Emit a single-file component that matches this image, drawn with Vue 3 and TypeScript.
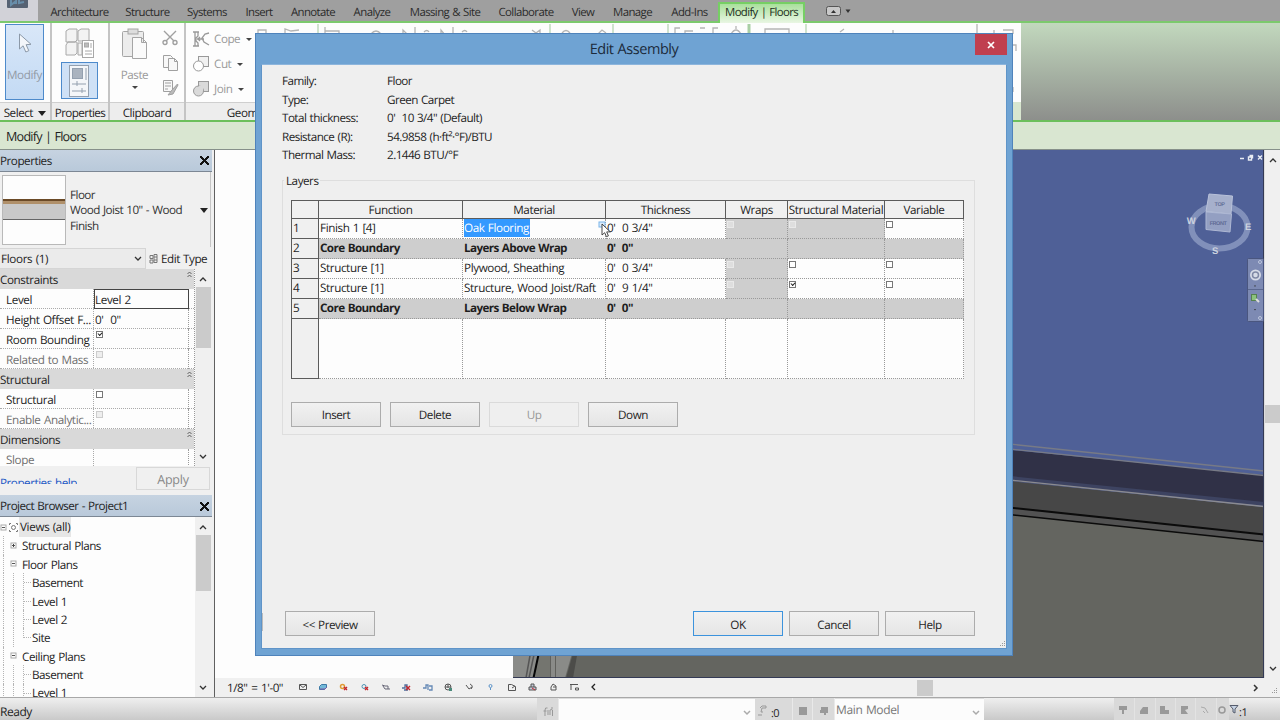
<script setup lang="ts">
interface Tab { label: string; active?: boolean }
interface PropRow { kind: 'head' | 'row'; label: string; value?: string; box?: 'on' | 'off' | 'dim'; dim?: boolean; focus?: boolean }
interface Node { label: string; depth: number; sign?: '+' | '-'; last?: boolean }
interface Layer { n: number; fn: string; mat: string; th: string; core?: boolean; wraps?: string; struct?: string; variable?: string; selected?: boolean }

const tabs: Tab[] = [
  { label: 'Architecture' }, { label: 'Structure' }, { label: 'Systems' }, { label: 'Insert' },
  { label: 'Annotate' }, { label: 'Analyze' }, { label: 'Massing & Site' }, { label: 'Collaborate' },
  { label: 'View' }, { label: 'Manage' }, { label: 'Add-Ins' }, { label: 'Modify | Floors', active: true },
]

const props: PropRow[] = [
  { kind: 'head', label: 'Constraints' },
  { kind: 'row', label: 'Level', value: 'Level 2', focus: true },
  { kind: 'row', label: 'Height Offset F...', value: '0\'  0"' },
  { kind: 'row', label: 'Room Bounding', box: 'on' },
  { kind: 'row', label: 'Related to Mass', box: 'dim', dim: true },
  { kind: 'head', label: 'Structural' },
  { kind: 'row', label: 'Structural', box: 'off' },
  { kind: 'row', label: 'Enable Analytic...', box: 'dim', dim: true },
  { kind: 'head', label: 'Dimensions' },
  { kind: 'row', label: 'Slope', dim: true },
]

const nodes: Node[] = [
  { label: 'Views (all)', depth: 0, sign: '-' },
  { label: 'Structural Plans', depth: 1, sign: '+' },
  { label: 'Floor Plans', depth: 1, sign: '-' },
  { label: 'Basement', depth: 2 },
  { label: 'Level 1', depth: 2 },
  { label: 'Level 2', depth: 2 },
  { label: 'Site', depth: 2, last: true },
  { label: 'Ceiling Plans', depth: 1, sign: '-' },
  { label: 'Basement', depth: 2 },
  { label: 'Level 1', depth: 2 },
]

const info: [string, string][] = [
  ['Family:', 'Floor'],
  ['Type:', 'Green Carpet'],
  ['Total thickness:', '0\'  10 3/4" (Default)'],
  ['Resistance (R):', '54.9858 (h·ft²·°F)/BTU'],
  ['Thermal Mass:', '2.1446 BTU/°F'],
]

const columns = ['', 'Function', 'Material', 'Thickness', 'Wraps', 'Structural Material', 'Variable']

const layers: Layer[] = [
  { n: 1, fn: 'Finish 1 [4]', mat: 'Oak Flooring', th: '0\'  0 3/4"', wraps: 'dim', struct: 'dim', variable: 'off', selected: true },
  { n: 2, fn: 'Core Boundary', mat: 'Layers Above Wrap', th: '0\'  0"', core: true },
  { n: 3, fn: 'Structure [1]', mat: 'Plywood, Sheathing', th: '0\'  0 3/4"', wraps: 'dim', struct: 'off', variable: 'off' },
  { n: 4, fn: 'Structure [1]', mat: 'Structure, Wood Joist/Raft', th: '0\'  9 1/4"', wraps: 'dim', struct: 'on', variable: 'off' },
  { n: 5, fn: 'Core Boundary', mat: 'Layers Below Wrap', th: '0\'  0"', core: true },
]

const layerButtons = [
  { label: 'Insert' }, { label: 'Delete' }, { label: 'Up', disabled: true }, { label: 'Down' },
]
</script>

<template>
  <div class="app">
    <header class="tabs">
      <div class="appmenu"><svg width="38" height="22" viewBox="0 0 38 22"><rect x="7" y="-4" width="21" height="12" rx="1" fill="#566273" /><path d="M11 0v5l5-4v3M19 0v3l5-1" stroke="#6f9fc0" stroke-width="2" fill="none" opacity=".7" /></svg></div>
      <div v-for="t in tabs" :key="t.label" class="tab" :class="{ active: t.active }"><span>{{ t.label }}</span></div>
      <svg class="tabmenu" width="30" height="14" viewBox="0 0 30 14"><rect x="1.500" y="2.500" width="14" height="9" rx="2" fill="#c8c8c8" stroke="#555" /><path d="M6 9l2.500-3 2.500 3zM20.500 5.500h5l-2.500 3.500z" fill="#333" /></svg>
    </header>

    <section class="ribbon">
      <div class="panel p-select">
        <div class="tools"><div class="bigtool"><svg width="14" height="24" viewBox="0 0 14 24"><path d="M1.500 2v15l3.600-3.200 2.700 6.200 3-1.300-2.700-6 4.900-.4z" fill="#f3f6fa" stroke="#8c99a8" /></svg><span>Modify</span></div></div>
        <div class="caption">Select <i class="tri"></i></div>
      </div>
      <div class="panel p-props">
        <div class="tools stack">
          <svg width="32" height="34" viewBox="0 0 32 34" fill="#f3f3f3" stroke="#a8a8a8"><path d="M3 5l3-2h8v11l-2 2H3zM15 5l3-2h8v12H15zM3 19l2-3h9v11l-2 2H3zM15 17h4v12h-4z" /><rect x="19.500" y="14.500" width="11" height="17" fill="#fff" /><rect x="21.500" y="17" width="4" height="4" fill="#bbb" /><path d="M28 17v5M22 25h7M22 28h7" /></svg>
          <div class="pressed"><svg width="22" height="34" viewBox="0 0 22 34" fill="#f4f6f9" stroke="#94a0af"><rect x="1.500" y="1.500" width="19" height="31" /><rect x="4.500" y="4.500" width="10" height="10" fill="#aab3bf" /><path d="M18 4v12M4 20h14M4 27h14M9 17v5M14 24v5" /></svg></div>
        </div>
        <div class="caption">Properties</div>
      </div>
      <div class="panel p-clip">
        <div class="tools clip">
          <div class="paste"><svg width="27" height="34" viewBox="0 0 27 34" fill="#ececec" stroke="#a5a5a5"><rect x="1.500" y="4.500" width="21" height="25" rx="1" /><rect x="7" y="2" width="10" height="5" fill="#ddd" /><path d="M11.500 10.500h9l5 5v16h-14zM20.500 10.500v5h5" fill="#fafafa" /></svg><span>Paste</span><i class="tri small"></i></div>
          <div class="minis">
            <svg width="16" height="18" viewBox="0 0 16 18" stroke="#a0a0a0" stroke-width="1.400" fill="none"><path d="M2 2l10 10M14 2L4 12" /><circle cx="3" cy="13.500" r="2" /><circle cx="13" cy="13.500" r="2" /></svg>
            <svg width="17" height="18" viewBox="0 0 17 18" stroke="#a0a0a0" fill="#f8f8f8"><path d="M1.500 1.500h7l2 2v10h-9z" /><path d="M6.500 4.500h6l3 3v9h-9zM12.500 4.500v3h3" /></svg>
            <svg width="17" height="18" viewBox="0 0 17 18" stroke="#a0a0a0" fill="#f8f8f8"><path d="M1.500 1.500h9v11h-9zM3 4h6M3 7h6M3 10h3" /><path d="M15.500 5L10 11l-4 5 5-1 5-9z" fill="#bbb" /></svg>
          </div>
        </div>
        <div class="caption">Clipboard</div>
      </div>
      <div class="panel p-geo">
        <div class="tools geo">
          <div class="geoitem"><svg width="18" height="18" viewBox="0 0 18 18" stroke="#999" fill="none" stroke-width="1.300"><path d="M1 2h6M1 16h6M3 2v14M6 2v4l-2 2v3l2 2v3M17 3l-4 1-3 4 2 4 5 3M5 9h7M8 7l-2 2 2 2" /></svg><span>Cope</span><i class="tri small"></i></div>
          <div class="geoitem"><svg width="18" height="18" viewBox="0 0 18 18" stroke="#999" fill="#f1f1f1"><rect x="6.500" y="1.500" width="10" height="10" /><circle cx="6.500" cy="11" r="5" fill="#fff" /></svg><span>Cut</span><i class="tri small"></i></div>
          <div class="geoitem"><svg width="18" height="18" viewBox="0 0 18 18" stroke="#999" fill="#dadada"><rect x="6.500" y="1.500" width="10" height="10" /><circle cx="6.500" cy="11" r="5" /><path d="M7 6h4v5H7z" stroke="none" /></svg><span>Join</span><i class="tri small"></i></div>
        </div>
        <div class="caption">Geometry</div>
      </div>
      <svg class="peek" width="774" height="98" viewBox="247 23 774 98" fill="none" stroke="#b5b5b5" stroke-width="1.300">
        <path d="M258 36v-6h8v4M285 34v-5l6 2 8-1M325 36v-9M325 31h14v3M371 34q5-6 10 0M403 34v-4l5 5M415 27v8M441 34v-4l4 5M453 27v8M424 32q3-3 5 0M462 32q3-3 5 0M532 30l4 3 4-3v5M562 33q4-5 8 0M598 34l4-4 4 3M675 35v-7h5M705 28h-5M713 35v-7h5M685 35v-4h8M731 34q5-8 10 0M736 29v-3M765 35v-6h24v6M840 32l4-3M893 30v4M1003 30h10v4M994 34v-4" />
        <path d="M318 24v97M550 24v97M613 24v97M668 24v97M806 24v97" stroke="#b7d6b5" />
        <path d="M749 24v97" stroke="#a9cfa5" stroke-width="3" /><path d="M977 24v97" />
        <path d="M1013 102h8v18h-8z" fill="#d8e6cf" stroke="none" /><path d="M1013 45h3v6M1013 87v5" />
      </svg>
      <div class="fade"></div>
    </section>

    <div class="options">Modify | Floors</div>

    <main class="work">
      <aside class="side">
        <div class="title">Properties<b class="x"></b></div>
        <div class="type">
          <div class="swatch"><i class="wood"></i><i class="joist"></i></div>
          <div class="typename">Floor<br>Wood Joist 10" - Wood<br>Finish</div>
          <i class="tri"></i>
        </div>
        <div class="filter">
          <div class="combo">Floors (1)<svg width="8" height="6" viewBox="0 0 8 6"><path d="M1 1l3 3 3-3" /></svg></div>
          <svg width="9" height="11" viewBox="0 0 9 11" fill="none" stroke="#777"><path d="M1 2.500h3v3H1zM5 1.500h3v8H5zM1 7h3v3H1zM5 4h3M5 7h3" /></svg>
          <span>Edit Type</span>
        </div>
        <div class="gridwrap">
          <div class="grid">
            <template v-for="(p, i) in props" :key="i">
              <div v-if="p.kind === 'head'" class="ghead">{{ p.label }}<svg width="5" height="7" viewBox="0 0 5 7"><path d="M.5 3l2-2 2 2M.5 6l2-2 2 2" /></svg></div>
              <div v-else class="grow" :class="{ dim: p.dim, focus: p.focus }">
                <span class="glabel">{{ p.label }}</span>
                <span class="gval"><template v-if="p.value">{{ p.value }}</template><i v-if="p.box" class="box" :class="p.box"></i></span>
              </div>
            </template>
          </div>
          <div class="vbar props"><svg width="8" height="6" viewBox="0 0 8 6"><path d="M1 5l3-3 3 3" /></svg><i></i><svg width="8" height="6" viewBox="0 0 8 6"><path d="M1 1l3 3 3-3" /></svg></div>
        </div>
        <div class="apply"><a>Properties help</a><div>Apply</div></div>
        <div class="title browser">Project Browser - Project1<b class="x"></b></div>
        <div class="treewrap">
          <div class="tree">
            <div v-for="(n, i) in nodes" :key="i" class="node" :class="['d' + n.depth, { last: n.last }]">
              <i v-if="n.depth" class="guide g0"></i><i v-if="n.depth === 2" class="guide g1"></i>
              <i v-if="n.depth === 2" class="elbow"></i>
              <svg v-if="n.sign" class="sign" width="7" height="7" viewBox="0 0 7 7"><rect x="1" y="1" width="5" height="5" fill="#fff" stroke="#aaa" /><path d="M2 3.500h3" stroke="#555" /><path v-if="n.sign === '+'" d="M3.500 2v3" stroke="#444" /></svg>
              <svg v-if="n.depth === 0" class="root" width="9" height="9" viewBox="0 0 9 9" fill="none" stroke="#777"><circle cx="4.500" cy="4.500" r="2" /><path d="M.5 2V.5H2M7 .5h1.500V2M.5 7v1.500H2M7 8.500h1.500V7" /></svg>
              <span>{{ n.label }}</span>
            </div>
          </div>
          <div class="vbar tree-bar"><svg width="8" height="6" viewBox="0 0 8 6"><path d="M1 5l3-3 3 3" /></svg><i></i><svg width="8" height="6" viewBox="0 0 8 6"><path d="M1 1l3 3 3-3" /></svg></div>
        </div>
      </aside>

      <div class="view">
        <div class="scene">
          <svg width="1049" height="528" viewBox="215 150 1049 528">
            <rect x="215" y="150" width="298" height="528" fill="#fdfdfd" />
            <rect x="513" y="150" width="751" height="528" fill="#4f6097" />
            <path d="M1000 449l264 26v29l-264-25z" fill="#303147" />
            <path d="M1000 475l264 27v4l-264-26z" fill="#3d4361" />
            <path d="M1000 480l264 27v35l-264-26z" fill="#474747" />
            <path d="M513 470l500 44 251 27v137H513z" fill="#646560" />
            <g fill="none" stroke="#777a86" stroke-width="1.400"><path d="M1000 443l264 28M1000 448l264 27.500" /><path d="M1000 479l264 27.500" stroke="#8b8b91" /></g>
            <path d="M1000 506.500l264 28v7l-264-28z" fill="#525252" />
            <path d="M1000 506.500l264 28" stroke="#0b0b0b" stroke-width="2" /><path d="M1000 513.500l264 28" stroke="#0b0b0b" stroke-width="1.500" />
            <path d="M513 650h60l-8 28h-52z" fill="#8a8b88" />
            <path d="M531 650l-5 28M535 650l-6 28" stroke="#555" stroke-width="1.500" />
            <path d="M539 650l-6 28h17v-28z" fill="#74756f" /><path d="M539.500 650l-6 28" stroke="#050505" stroke-width="2" /><path d="M550.500 650v28M555.500 650v28" stroke="#60605c" />
            <path d="M574 650l-8 28h7l5-28z" fill="#4c4c49" />
            <path d="M1263.500 150v528M513 677.500h751" stroke="#343a55" fill="none" />
            <path d="M1240 158.500h4M1248.500 157h3v3h-3zM1249.500 155.500h3v3M1258 155.500l4 4M1262 155.500l-4 4" stroke="#e9ecf3" fill="none" stroke-width="1.400" />
          </svg>
          <svg class="cube" width="70" height="72" viewBox="1184 188 70 72">
            <ellipse cx="1219.500" cy="228" rx="28" ry="21.500" fill="none" stroke="#8190ba" stroke-width="6" />
            <path d="M1209 195l23.500 2-1.500 18-25-2.500z" fill="#a6b0cc" stroke="#b9c2da" /><path d="M1206 213l25.500 2-1.500 18-24-2.500z" fill="#939fc2" stroke="#aeb8d4" />
            <g font-family="Liberation Sans, sans-serif" font-weight="700" text-anchor="middle"><text x="1219.500" y="207" font-size="5.500" fill="#66719a">TOP</text><text x="1218" y="226" font-size="5.500" fill="#5e6a94">FRONT</text><g font-size="9.500" fill="#ccd2df"><text x="1191" y="224.500">W</text><text x="1248" y="231">E</text><text x="1215" y="254.500">S</text></g></g>
          </svg>
          <svg class="nav" width="17" height="64" viewBox="0 0 17 64"><rect x=".5" y=".5" width="16" height="63" rx="1" fill="#7d8ab3" stroke="#4a567f" /><path d="M1 31.500h15" stroke="#5b688f" /><circle cx="13" cy="4" r="1.500" fill="none" stroke="#bcc5dc" /><circle cx="8.500" cy="17" r="5.500" fill="#d6dbe7" /><circle cx="8.500" cy="17" r="3" fill="none" stroke="#7f88a5" stroke-width="1.500" /><path d="M7 27.500h2l-1 1.500zM7 51h2l-1 1.500z" fill="#333" /><rect x="4.500" y="36.500" width="5" height="6" fill="#8cc27d" stroke="#55824e" /><path d="M9 41l3 3" stroke="#ddd" stroke-width="2" /><circle cx="13" cy="60" r="1.500" fill="none" stroke="#bcc5dc" /></svg>
        </div>
        <div class="vbar canvas"><svg width="8" height="6" viewBox="0 0 8 6"><path d="M1 5l3-3 3 3" /></svg><i></i><svg width="8" height="6" viewBox="0 0 8 6"><path d="M1 1l3 3 3-3" /></svg></div>
        <div class="viewbar">
          <span>1/8" = 1'-0"</span>
          <svg width="310" height="14" viewBox="295 680 310 14" fill="none" stroke="#555">
            <path d="M299.500 684.500h7v5h-7zM300 685l3 2.500 3-2.500" />
            <path d="M319.500 686.500l2-2h5v3l-2 2h-5z" fill="#73b9d8" stroke="#3d79a5" /><path d="M320 689h5l2-2" stroke="#7a5ba5" />
            <circle cx="342.500" cy="686.500" r="2" stroke="#e09b35" stroke-width="1.500" /><path d="M344 687l3 3M347 687l-3 3" stroke="#c5272d" stroke-width="1.400" />
            <circle cx="364" cy="686.500" r="2" stroke="#4e94b6" /><path d="M365 687l3 3M368 687l-3 3" stroke="#c5272d" stroke-width="1.400" />
            <path d="M382 685l3 1h3v3h-3l-2-3M388 689h2" stroke="#667" />
            <path d="M402 688h3v-3h2v5M404 690h4" stroke="#4d6d9c" stroke-width="1.300" /><path d="M406 686l4 4M410 686l-4 4" stroke="#c5272d" stroke-width="1.400" />
            <path d="M423 688h3v-3h2v5M429 686h3v4h-3" stroke="#6488b5" stroke-width="1.300" />
            <circle cx="448" cy="687" r="3" /><path d="M445 687h6M448 684v4" /><path d="M449 688h3v3h-3z" fill="#4a8a7b" stroke="none" />
            <path d="M466 685l3 4 3-2M470 684q4 2 1 5" />
            <circle cx="490.500" cy="686" r="1.500" stroke="#5b93c9" /><path d="M490.500 688v2" stroke="#5b93c9" />
            <path d="M508.500 684.500h3l4 2v4h-7zM512 688l3-2" />
            <path d="M529 687h7v3h-7zM531 687v-3h3v3" fill="#c3cad8" /><path d="M532 688l3 2" stroke="#c5272d" />
            <path d="M551 690h5v-4l-3-2-2 3zM553 687h3" />
            <path d="M570 684.500h8M571 684v6M575.500 688h3v2h-3z" />
            <path d="M595 684l-3 3 3 3" stroke="#222" stroke-width="1.300" />
          </svg>
          <i class="thumb"></i>
          <svg class="right" width="8" height="10" viewBox="0 0 8 10" fill="none" stroke="#333" stroke-width="1.500"><path d="M2 2l3 3-3 3" /></svg>
        </div>
        <div class="corner"><svg width="7" height="7" viewBox="0 0 7 7"><path d="M5 0h1v1H5zM5 2h1v1H5zM3 2h1v1H3zM5 4h1v1H5zM3 4h1v1H3zM1 4h1v1H1z" fill="#999" /></svg></div>
      </div>
    </main>

    <footer class="status">
      <span class="ready">Ready</span>
      <div class="cell s1"><svg width="12" height="12" viewBox="0 0 12 12" fill="none" stroke="#999"><path d="M3 11V5q0-3 2.500-2M1.500 6h3M6 5v5M8 10V5q2.500-1 2.500 0v6M9 3h2" /></svg></div>
      <div class="pick a"><svg width="8" height="6" viewBox="0 0 8 6"><path d="M1 1l3 3 3-3" /></svg></div>
      <div class="cell s2"><svg width="10" height="11" viewBox="0 0 10 11" fill="none" stroke="#999"><path d="M3 3l2-2h4v2H5l-1 4M1 10h4M4 7h2" /></svg><b>:0</b></div>
      <div class="cell s3"><svg width="10" height="10" viewBox="0 0 10 10"><rect x="1" y="1" width="8" height="8" fill="#999" /></svg></div>
      <div class="cell s4"><svg width="10" height="10" viewBox="0 0 10 10"><path d="M2 1h7v6H7v2H5V7H1V4h1z" fill="#999" /></svg></div>
      <div class="pick b">Main Model<svg width="8" height="6" viewBox="0 0 8 6"><path d="M1 1l3 3 3-3" /></svg></div>
      <div class="sel">
        <svg width="115" height="22" viewBox="1114 699 115 22" fill="#999"><path d="M1119 707h8v4h-3v4h-2v-4h-3zM1140 712l3-4h5v7h-8zM1160 707h5v4h4v4h-9zM1181 707h7v3l-3 1 3 4h-7z" /><path d="M1201 708l4 1 3 5M1203 712l2 2" fill="none" stroke="#aaa" /><circle cx="1222" cy="711" r="3" fill="none" stroke="#999" stroke-width="1.500" /><path d="M1134.500 699v22M1155.500 699v22M1175.500 699v22M1195.500 699v22M1216.500 699v22" stroke="#e3e3e3" /></svg>
        <svg width="10" height="10" viewBox="0 0 10 10" fill="#c7d3e4" stroke="#555c6c"><path d="M1 1.500h8L6 5v4l-2-1V5z" /></svg><b>:1</b>
      </div>
    </footer>

    <div class="dialog">
      <div class="dtitle">Edit Assembly<div class="dclose"><svg width="8" height="8" viewBox="0 0 8 8"><path d="M1 1l6 6M7 1L1 7" stroke="#fff" stroke-width="1.700" /></svg></div></div>
      <div class="dbody">
        <dl class="info"><template v-for="r in info" :key="r[0]"><dt>{{ r[0] }}</dt><dd>{{ r[1] }}</dd></template></dl>
        <div class="group">
          <span class="legend">Layers</span>
          <div class="layers">
            <div v-for="c in columns" :key="c" class="th"><span>{{ c }}</span></div>
            <template v-for="l in layers" :key="l.n">
              <div class="num">{{ l.n }}</div>
              <div class="td" :class="{ core: l.core }">{{ l.fn }}</div>
              <div class="td" :class="{ core: l.core }"><span :class="{ selected: l.selected }">{{ l.mat }}</span></div>
              <div class="td" :class="{ core: l.core }">{{ l.th }}</div>
              <div class="td chk gray"><i v-if="l.wraps" class="box" :class="l.wraps"></i></div>
              <div class="td chk" :class="{ gray: l.core || l.struct === 'dim' }"><i v-if="l.struct" class="box" :class="l.struct"></i></div>
              <div class="td chk" :class="{ gray: l.core }"><i v-if="l.variable" class="box" :class="l.variable"></i></div>
            </template>
            <div class="num"></div><div v-for="k in 6" :key="'e' + k" class="td"></div>
          </div>
          <div class="buttons"><div v-for="b in layerButtons" :key="b.label" class="btn" :class="{ disabled: b.disabled }">{{ b.label }}</div></div>
        </div>
        <div class="actions">
          <div class="btn">&lt;&lt; Preview</div><span></span>
          <div class="btn primary">OK</div><div class="btn">Cancel</div><div class="btn">Help</div>
        </div>
        <i class="notch"></i>
        <svg class="grip" width="7" height="7" viewBox="0 0 7 7"><path d="M5 0h1v1H5zM5 2h1v1H5zM3 2h1v1H3zM5 4h1v1H5zM3 4h1v1H3zM1 4h1v1H1z" fill="#999" /></svg>
      </div>
    </div>

    <svg class="cursor" width="16" height="18" viewBox="0 0 16 18"><rect x="1" y="1" width="6" height="5" fill="#dcecfb" stroke="#79b4ea" /><path d="M4 3v11l2.700-2.300 1.700 4 2-.8-1.700-4h3.600z" fill="#fff" stroke="#333" stroke-width=".9" /></svg>
  </div>
</template>

<style>
body { margin: 0; overflow: hidden; }
</style>

<style scoped>
.app { position: relative; width: 1280px; height: 720px; overflow: hidden; display: flex; flex-direction: column; font: 11.700px/16px "Open Sans", "Noto Sans", sans-serif; letter-spacing: -.48px; word-spacing: .7px; text-rendering: geometricPrecision; color: #1e1e1e; background: #efefef; }
.app * { box-sizing: border-box; }
svg { display: block; flex: none; }
b { font-weight: 400; }
.tri { display: inline-block; border: 4px solid transparent; border-top: 5px solid #222; border-bottom: 0; }
.tri.small { border-width: 3px 3px 0; border-top-color: #444; }

.tabs { height: 23px; flex: none; display: grid; grid-template-columns: 42px 75px 61px 58px 46px 62px 56px 90px 72px 42px 57px 57px 87px 1fr; background: #9f9f9f; border-bottom: 2px solid #7cc96d; }
.appmenu { width: 38px; height: 21px; background: #d2d2d8; }
.tab { text-align: center; line-height: 26px; font-size: 11.400px; letter-spacing: -.58px; color: #2c2c2c; white-space: nowrap; }
.tab.active { height: 21px; margin-top: 2px; line-height: 18px; background: linear-gradient(#a9e09c, #e9f6e3); border: 2px solid #76cf64; border-bottom: 0; color: #1e2e1e; z-index: 1; letter-spacing: -.65px; }
.tabmenu { margin: 4px 0 0 20px; }

.ribbon { position: relative; height: 99px; flex: none; display: flex; background: #fdfdfd; border-bottom: 2px solid #6cbf5c; overflow: hidden; }
.panel { display: flex; flex-direction: column; border-right: 2px solid #c4c4c4; flex: none; }
.p-select { width: 52px; } .p-props { width: 58px; } .p-clip { width: 76px; } .p-geo { width: 132px; border: 0; }
.tools { height: 79px; flex: none; }
.caption { height: 18px; background: #ededed; border-top: 1px solid #cfcfcf; text-align: center; line-height: 20px; white-space: nowrap; }
.p-props .caption { letter-spacing: -.6px; }
.caption .tri { margin-left: 2px; vertical-align: 1px; }
.bigtool { width: 39px; height: 76px; margin: 1px 0 0 5px; border: 1px solid #4d8acb; background: linear-gradient(#d9e7f8, #c3daf4); display: flex; flex-direction: column; align-items: center; color: #929aa5; letter-spacing: -.4px; }
.bigtool svg { margin: 7px 0 11px; }
.stack { display: flex; flex-direction: column; align-items: center; padding: 3px 2px 0 0; }
.pressed { width: 37px; height: 37px; margin-top: 2px; padding: 1px 6px; border: 1px solid #4d8acb; background: #cfe1f6; }
.clip { display: flex; padding: 4px 0 0 11px; color: #9a9a9a; }
.paste { width: 27px; display: flex; flex-direction: column; align-items: center; }
.paste span { margin: 6px 0 3px; }
.minis { display: flex; flex-direction: column; gap: 7px; margin-left: 14px; padding-top: 2px; }
.geo { padding: 7px 0 0 6px; display: flex; flex-direction: column; gap: 7px; color: #9a9a9a; }
.geoitem { height: 18px; display: flex; align-items: center; gap: 4px; }
.geoitem .tri { margin-left: 2px; }
.peek { position: absolute; left: 247px; top: 0; }
.fade { position: absolute; left: 1021px; right: 0; top: 0; bottom: 0; background: linear-gradient(#c2d8bd, #8d8f8c); }
.options { height: 28px; flex: none; background: #d9e6d1; border-bottom: 1px solid #86908a; padding-left: 6px; line-height: 29px; font-size: 12.600px; letter-spacing: -.75px; }

.work { height: 547px; flex: none; display: flex; }
.side { width: 215px; border-right: 1px solid #606060; background: #f0f0f0; flex: none; display: flex; flex-direction: column; }
.title { height: 22px; flex: none; width: 212px; background: linear-gradient(#c6d3e1, #b9c9da); border-bottom: 1px solid #7c8794; display: flex; align-items: center; justify-content: space-between; line-height: 20px; white-space: nowrap; }
.browser { letter-spacing: -.58px; padding-top: 1px; }
.x { width: 9px; height: 9px; margin-right: 3px; background: linear-gradient(45deg, transparent 43%, #111 43% 57%, transparent 57%), linear-gradient(-45deg, transparent 43%, #111 43% 57%, transparent 57%); }
.type { height: 75px; width: 211px; border-right: 1px solid #c5c5c5; display: flex; align-items: center; padding: 1px 1px 0 2px; flex: none; }
.swatch { width: 64px; height: 70px; flex: none; background: #fdfdfd; border: 1px solid #b9b9b9; padding-top: 23px; }
.wood { display: block; height: 5px; background: #b0906a; border-top: 2px solid #6b4a27; }
.joist { display: block; height: 16px; background: #c9c9c9; border-bottom: 1px solid #666; }
.typename { width: 130px; margin-left: 4px; padding-top: 2px; line-height: 15.500px; white-space: nowrap; color: #333; letter-spacing: -.55px; }
.filter { height: 22px; flex: none; display: flex; align-items: center; gap: 2px; white-space: nowrap; padding-top: 1px; }
.combo { width: 146px; height: 21px; border: 1px solid #d5d5d5; border-left: 0; display: flex; align-items: center; justify-content: space-between; padding: 1px 3px 0 1px; background: #ebebeb; letter-spacing: -.35px; }
.combo svg, .vbar svg { fill: none; stroke: #333; stroke-width: 1.300; }
.filter > svg, .filter > span { margin-left: 1px; }
.gridwrap { height: 197px; flex: none; display: flex; overflow: hidden; }
.grid { width: 195px; background: #fdfdfd; border-right: 1px dotted #999; }
.ghead { height: 20px; background: #d9d9d9; display: flex; justify-content: space-between; line-height: 23px; letter-spacing: -.4px; }
.ghead svg { margin: 2px 2px; fill: none; stroke: #444; stroke-width: .8; }
.grow { height: 20px; display: flex; border-bottom: 1px dotted #aaa; white-space: nowrap; line-height: 22px; letter-spacing: -.38px; }
.glabel { width: 94px; padding-left: 6px; border-right: 1px dotted #aaa; flex: none; }
.gval { width: 95px; height: 20px; padding-left: 1px; border-right: 1px dotted #999; white-space: pre; flex: none; }
.focus .gval { border: 1px solid #444; line-height: 20px; padding-left: 0; }
.dim { color: #6f6f6f; }
.box { display: block; width: 7px; height: 7px; margin: 2px 0 0 1px; border: 1px solid #777; background: #fff; position: relative; }
.box.dim { border-color: #ccc; background: #eee; }
.box.on::after { content: ""; position: absolute; left: 1px; top: 0; width: 3px; height: 2px; border: solid #222; border-width: 0 0 1px 1px; transform: rotate(-45deg); }
.vbar { width: 16px; background: #f0f0f0; display: flex; flex-direction: column; align-items: center; }
.vbar i { width: 15px; background: #cbcbcb; }
.vbar svg:last-child { margin-top: auto; }
.props { padding: 7px 0 6px; } .props i { margin-top: 5px; height: 61px; }
.apply { height: 29px; flex: none; display: flex; justify-content: space-between; width: 210px; padding-top: 1px; }
.apply a { color: #1a56c4; height: 17px; line-height: 32px; overflow: hidden; }
.apply div { width: 74px; height: 23px; border: 1px solid #d8d8d8; text-align: center; line-height: 24px; color: #888; font-size: 12.500px; letter-spacing: -.2px; }
.treewrap { flex: 1; display: flex; overflow: hidden; min-height: 0; }
.tree { width: 195px; background: #fdfdfd; padding-top: 1px; }
.node { height: 18.400px; display: flex; align-items: center; position: relative; white-space: nowrap; line-height: 18px; }
.node span { padding-top: 1.500px; }
.d0 span { background: #e6e6e6; padding: 0 1px; margin-left: 1px; letter-spacing: -.35px; line-height: 19px; } .d0 .sign { margin-right: 2px; }
.node.d0 span { padding: 1px 1px 0; }
.d1 { padding-left: 10px; } .d1 span { margin-left: 5px; }
.d2 { padding-left: 32px; }
.guide { position: absolute; top: 0; bottom: 0; left: 3px; width: 11px; border: dotted #b5b5b5; border-width: 0 1px; }
.d1 .guide { border-right: 0; }
.guide.g1 { left: 23px; border-right: 0; }
.last .g1 { bottom: 9px; }
.elbow { position: absolute; left: 24px; width: 7px; top: 9px; border-top: 1px dotted #b5b5b5; }
.sign, .root { position: relative; }
.tree-bar { padding: 7px 0 6px; } .tree-bar i { margin-top: 5px; height: 56px; }

.view { flex: 1; display: grid; grid-template: 528px 19px / 1049px 16px; }
.scene { position: relative; }
.cube { position: absolute; left: 969px; top: 37px; }
.nav { position: absolute; left: 1032px; top: 108px; }
.viewbar { background: #f0f0f0; display: flex; align-items: center; padding-left: 12px; white-space: nowrap; }
.viewbar > span { width: 68px; word-spacing: 1.200px; padding-top: 1px; }
.viewbar > svg:nth-child(2) { margin-top: -1px; }
.thumb { width: 16px; height: 16px; margin-left: 312px; background: #cbcbcb; }
.right { margin: 0 4px 0 auto; }
.canvas { padding: 7px 0 6px; border-left: 1px solid #ddd; } .canvas i { height: 18px; margin-top: 242px; }
.corner { display: flex; align-items: flex-end; justify-content: flex-end; padding: 2px; background: #f0f0f0; }

.status { height: 23px; flex: none; display: flex; border-top: 1px solid #a8a8a8; background: linear-gradient(#efefef, #c9c9c9); }
.ready { width: 537px; line-height: 27px; font-size: 12px; letter-spacing: -.45px; }
.cell { background: #dadada; display: flex; align-items: center; justify-content: center; padding-top: 3px; border-right: 1px solid #e9e9e9; }
.cell b { font-size: 11px; margin: 6px 0 0 4px; }
.s1 { width: 22px; } .s2 { width: 38px; padding-right: 11px; } .s3 { width: 20px; } .s4 { width: 22px; }
.pick { display: flex; justify-content: flex-end; align-items: center; background: #fcfcfc; border-top: 1px solid #ddd; color: #777; }
.pick svg { fill: none; stroke: #aaa; stroke-width: 1.500; margin: 6px 4px 0; }
.pick.a { width: 196px; } .pick.b { width: 149px; justify-content: space-between; padding-left: 1px; font-size: 12px; letter-spacing: -.35px; }
.sel { margin-left: 130px; display: flex; align-items: center; }
.sel > svg:first-child { background: #d9d9d9; }
.sel b { margin-top: 7px; font-size: 11px; }

.dialog { position: absolute; left: 255px; top: 33px; width: 758px; height: 623px; background: #6fa3d3; border: 1px solid #4f83bb; padding: 0 5px 6px; }
.dtitle { height: 30px; text-align: center; line-height: 32px; font-size: 14.500px; letter-spacing: -.45px; color: #1c2b3c; position: relative; }
.dclose { position: absolute; right: 0; top: 0; width: 32px; height: 21px; background: #c03f4f; display: flex; align-items: center; justify-content: center; }
.dbody { height: 585px; background: #efefef; border: 1px solid #5f94c8; border-top-color: #8db5dc; position: relative; padding: 7px 31px 0 20px; }
.info { margin: 0; display: grid; grid-template-columns: 105px 1fr; grid-auto-rows: 18.600px; line-height: 18.600px; white-space: pre; letter-spacing: -.55px; }
dd { margin: 0; }
.group { height: 255px; margin-top: 15px; width: 693px; border: 1px solid #dedede; position: relative; padding: 19px 0 0 8px; }
.legend { position: absolute; left: 1px; top: -8px; padding: 0 2px; background: #efefef; }
.layers { width: 673px; display: grid; grid-template-columns: 27px 144px 143px 120px 62px 97px 79px; grid-template-rows: 18px repeat(5, 20px) 60px; background: #fdfdfd; border: solid #5b5b5b; border-width: 1px 0 0 1px; line-height: 19px; }
.th { background: #f0f0f0; border: solid #5b5b5b; border-width: 0 1px 1px 0; text-align: center; line-height: 19px; white-space: nowrap; overflow: hidden; letter-spacing: -.42px; }
.num { background: #f0f0f0; border: solid #5b5b5b; border-width: 0 1px 1px 0; padding-left: 1px; }
.td { border: dotted #999; border-width: 0 1px 1px 0; padding-left: 1px; white-space: pre; overflow: hidden; letter-spacing: -.4px; }
.core { font-weight: 700; background: #cecece; border-right-color: #cecece; letter-spacing: -.6px; }
.gray { background: #cecece; }
.gray .box.dim { background: #dedede; border-color: #e9e9e9; }
.selected { background: #3399ff; color: #fff; display: block; width: 66px; height: 18px; line-height: 19px; }
.chk .box { margin-left: 0; }
.buttons { display: flex; gap: 9px; margin-top: 23px; }
.btn { width: 90px; height: 25px; border: 1px solid #acacac; background: linear-gradient(#f1f1f1, #e5e5e5); text-align: center; line-height: 25px; }
.disabled { border-color: #dadada; background: #efefef; color: #999; }
.primary { border-color: #3c93dd; }
.actions { display: flex; gap: 6px; margin: 176px 0 0 3px; }
.actions .btn { line-height: 26px; }
.actions span { flex: 1; }
.notch { position: absolute; left: 0; top: 548px; width: 1px; height: 18px; background: #bbb; }
.grip { position: absolute; right: 0; bottom: 0; }
.cursor { position: absolute; left: 598px; top: 221px; }
</style>
